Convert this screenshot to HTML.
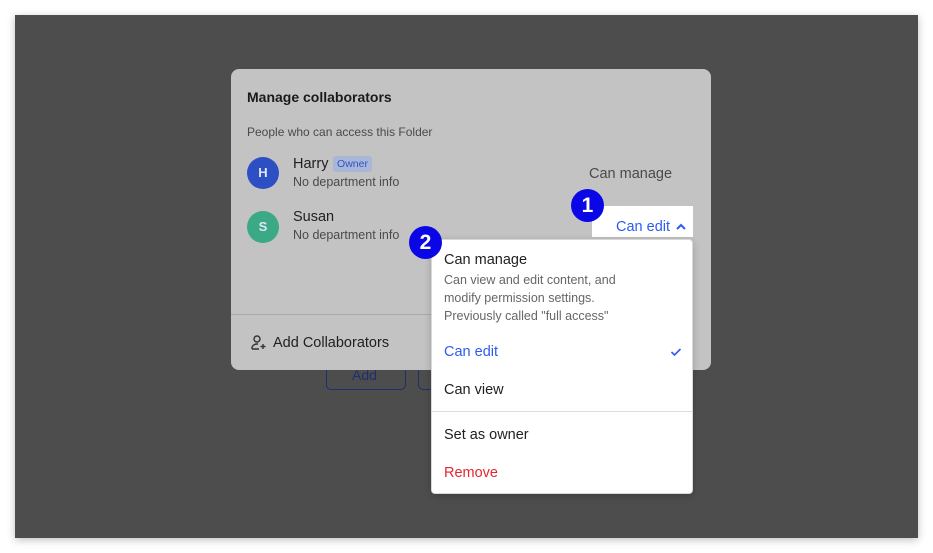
<!DOCTYPE html>
<html><head><style>
*{margin:0;padding:0;box-sizing:border-box}
body{width:933px;height:553px;background:#fff;position:relative;overflow:hidden;font-family:"Liberation Sans",Arial,sans-serif}
.a{position:absolute}
.bg{left:15px;top:15px;width:903px;height:523px;background:#4d4d4d;box-shadow:0 2px 8px rgba(0,0,0,.25)}
.dlg{left:231px;top:69px;width:480px;height:301px;background:#c3c3c3;border-radius:8px}
.t{white-space:nowrap}
.av{width:32px;height:32px;border-radius:50%;color:#dfe6f5;font-size:13px;font-weight:bold;text-align:center;line-height:32px}
.badge{width:33px;height:33px;border-radius:50%;background:#0a06e6;color:#fff;font-size:21px;font-weight:bold;text-align:center;line-height:33px}
.menu{left:431px;top:239px;width:262px;height:255px;background:#fff;border-radius:4px;box-shadow:0 2px 8px rgba(0,0,0,.2);border:1px solid #d8d8d8}
</style></head><body>
<div class="a bg"></div>
<div class="a" style="left:326px;top:355px;width:80px;height:35px;border:1.5px solid #1f2f6e;border-radius:5px"></div>
<div class="a t" style="left:352px;top:367px;color:#1f2f6e;font-size:14px">Add</div>
<div class="a" style="left:418px;top:355px;width:40px;height:35px;border:1.5px solid #1f2f6e;border-radius:5px"></div>
<div class="a dlg"></div>
<div class="a t" style="left:247px;top:89px;font-size:14px;font-weight:bold;color:#1a1a1a">Manage collaborators</div>
<div class="a t" style="left:247px;top:125px;font-size:12px;color:#4a4a4a">People who can access this Folder</div>
<div class="a av" style="left:247px;top:157px;background:#2d4fc4">H</div>
<div class="a t" style="left:293px;top:156px;font-size:14.5px;color:#1f1f1f">Harry</div>
<div class="a t" style="left:333px;top:156px;width:39px;height:16px;font-size:10.5px;line-height:16px;text-align:center;color:#2d55c8;background:#a9b6d8;border-radius:3px">Owner</div>
<div class="a t" style="left:293px;top:175px;font-size:12.5px;color:#4a4a4a">No department info</div>
<div class="a t" style="left:589px;top:166px;font-size:14.5px;color:#4a4a4a">Can manage</div>
<div class="a av" style="left:247px;top:211px;background:#3ba886">S</div>
<div class="a t" style="left:293px;top:209px;font-size:14.5px;color:#1f1f1f">Susan</div>
<div class="a t" style="left:293px;top:228px;font-size:12.5px;color:#4a4a4a">No department info</div>
<div class="a" style="left:592px;top:206px;width:101px;height:31px;background:#fff"></div>
<div class="a t" style="left:616px;top:219px;font-size:14.5px;color:#2d5bf0">Can edit</div>
<svg class="a" style="left:675px;top:222px" width="12" height="9"><path d="M2 7L6 3L10 7" stroke="#2d5bf0" stroke-width="2" fill="none"/></svg>
<div class="a" style="left:231px;top:314px;width:200px;height:1px;background:#aaa"></div>
<svg class="a" style="left:250px;top:334px" width="18" height="18" viewBox="0 0 18 18"><circle cx="7" cy="5" r="3" stroke="#333" stroke-width="1.4" fill="none"/><path d="M2 15v-1c0-2 2-4 5-4h1M2 15h7M13 10v5M10.5 12.5h5" stroke="#333" stroke-width="1.4" fill="none"/></svg>
<div class="a t" style="left:273px;top:335px;font-size:14.5px;color:#1f1f1f">Add Collaborators</div>
<div class="a menu"></div>
<div class="a t" style="left:444px;top:252px;font-size:14.5px;color:#1f1f1f">Can manage</div>
<div class="a t" style="left:444px;top:271px;font-size:12.5px;color:#666;line-height:18px">Can view and edit content, and<br>modify permission settings.<br>Previously called "full access"</div>
<div class="a t" style="left:444px;top:344px;font-size:14.5px;color:#2d5bf0">Can edit</div>
<svg class="a" style="left:670px;top:347px" width="12" height="10"><path d="M1.5 5L4.5 8L10.5 2" stroke="#2d5bf0" stroke-width="1.6" fill="none"/></svg>
<div class="a t" style="left:444px;top:382px;font-size:14.5px;color:#1f1f1f">Can view</div>
<div class="a" style="left:432px;top:411px;width:260px;height:1px;background:#dedede"></div>
<div class="a t" style="left:444px;top:427px;font-size:14.5px;color:#1f1f1f">Set as owner</div>
<div class="a t" style="left:444px;top:465px;font-size:14.5px;color:#e5262d">Remove</div>
<div class="a badge" style="left:571px;top:189px">1</div>
<div class="a badge" style="left:409px;top:226px">2</div>
</body></html>
